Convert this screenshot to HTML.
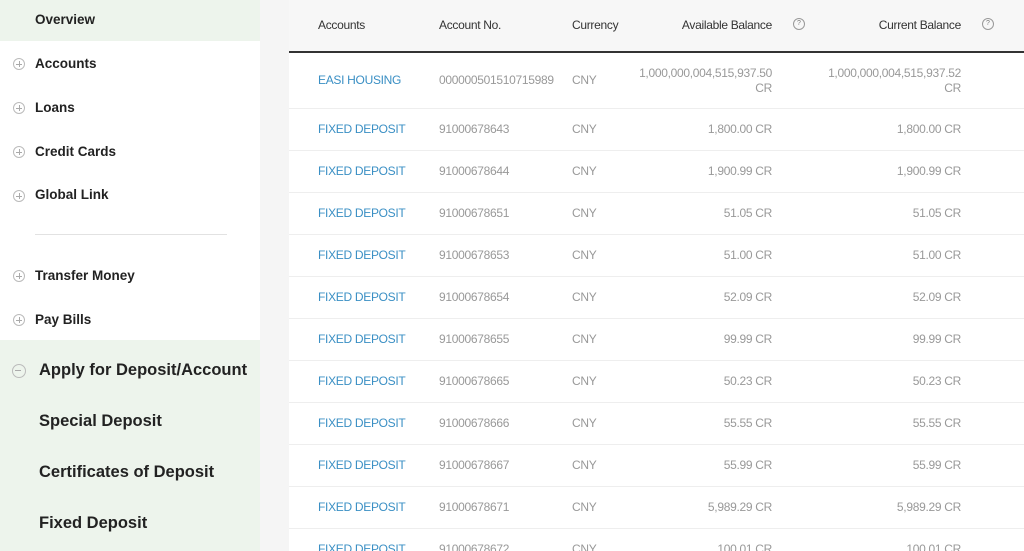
<!DOCTYPE html><html><head><style>
html,body{margin:0;width:1024px;height:551px;overflow:hidden}
body{background:#f5f5f5;font-family:"Liberation Sans",sans-serif;position:relative}
.side{position:absolute;left:0;top:0;width:260px;height:551px;background:#edf4ec}
.white{position:absolute;left:0;top:41px;width:260px;height:299px;background:#fff}
.it{position:absolute;left:35px;font-size:13.5px;font-weight:bold;color:#222}
.ic{position:absolute;left:13px;width:12px;height:12px;border:1px solid #bbb;border-radius:50%;box-sizing:border-box}
.ic:before{content:"";position:absolute;left:2px;top:5px;width:6px;height:1px;background:#aaa}
.ic.p:after{content:"";position:absolute;left:5px;top:2px;width:1px;height:6px;background:#aaa}
.big{position:absolute;left:39px;font-size:16.5px;font-weight:bold;color:#222}
.main{position:absolute;left:289px;top:0;width:735px;height:551px;background:#fff;overflow:hidden}
.hd{position:absolute;left:0;top:0;width:735px;height:51px;background:#f7f7f7;border-bottom:2px solid #333}
.h{position:absolute;top:18px;font-size:12px;color:#333;letter-spacing:-0.3px}
.q{position:absolute;top:18px;width:10px;height:10px;border:1px solid #999;border-radius:50%;font-size:7px;color:#777;text-align:center;line-height:10px}
.row{position:absolute;left:0;width:735px;border-bottom:1px solid #eee;font-size:12px;color:#999;letter-spacing:-0.3px}
.row span{position:absolute}
.a{left:29px;color:#3a8fc4}.n{left:150px}.c{left:283px}
.v1{right:252px;text-align:right}.v2{right:63px;text-align:right}
</style></head><body>
<div class="side"></div>
<div class="white"></div>
<div class="it" style="top:12px">Overview</div>
<div class="ic p" style="top:58px"></div><div class="it" style="top:56px">Accounts</div>
<div class="ic p" style="top:102px"></div><div class="it" style="top:100px">Loans</div>
<div class="ic p" style="top:146px"></div><div class="it" style="top:144px">Credit Cards</div>
<div class="ic p" style="top:190px"></div><div class="it" style="top:187px">Global Link</div>
<div style="position:absolute;left:35px;top:234px;width:192px;height:1px;background:#e2e2e2"></div>
<div class="ic p" style="top:270px"></div><div class="it" style="top:268px">Transfer Money</div>
<div class="ic p" style="top:314px"></div><div class="it" style="top:312px">Pay Bills</div>
<div class="ic" style="top:364px;left:12px;width:14px;height:14px"></div><div class="big" style="top:361px">Apply for Deposit/Account</div>
<div class="big" style="top:412px">Special Deposit</div>
<div class="big" style="top:463px">Certificates of Deposit</div>
<div class="big" style="top:514px">Fixed Deposit</div>
<div class="main">
<div class="hd">
<div class="h" style="left:29px">Accounts</div>
<div class="h" style="left:150px">Account No.</div>
<div class="h" style="left:283px">Currency</div>
<div class="h" style="right:252px">Available Balance</div>
<div class="q" style="left:504px">?</div>
<div class="h" style="right:63px">Current Balance</div>
<div class="q" style="left:693px">?</div>
</div>
<div class="row" style="top:53px;height:55px"><span class="a" style="top:20px">EASI HOUSING</span><span class="n" style="top:20px">000000501510715989</span><span class="c" style="top:20px">CNY</span><span class="v1" style="top:13px;line-height:15px">1,000,000,004,515,937.50<br>CR</span><span class="v2" style="top:13px;line-height:15px">1,000,000,004,515,937.52<br>CR</span></div>
<div class="row" style="top:109px;height:41px"><span class="a" style="top:13px">FIXED DEPOSIT</span><span class="n" style="top:13px">91000678643</span><span class="c" style="top:13px">CNY</span><span class="v1" style="top:13px">1,800.00 CR</span><span class="v2" style="top:13px">1,800.00 CR</span></div>
<div class="row" style="top:151px;height:41px"><span class="a" style="top:13px">FIXED DEPOSIT</span><span class="n" style="top:13px">91000678644</span><span class="c" style="top:13px">CNY</span><span class="v1" style="top:13px">1,900.99 CR</span><span class="v2" style="top:13px">1,900.99 CR</span></div>
<div class="row" style="top:193px;height:41px"><span class="a" style="top:13px">FIXED DEPOSIT</span><span class="n" style="top:13px">91000678651</span><span class="c" style="top:13px">CNY</span><span class="v1" style="top:13px">51.05 CR</span><span class="v2" style="top:13px">51.05 CR</span></div>
<div class="row" style="top:235px;height:41px"><span class="a" style="top:13px">FIXED DEPOSIT</span><span class="n" style="top:13px">91000678653</span><span class="c" style="top:13px">CNY</span><span class="v1" style="top:13px">51.00 CR</span><span class="v2" style="top:13px">51.00 CR</span></div>
<div class="row" style="top:277px;height:41px"><span class="a" style="top:13px">FIXED DEPOSIT</span><span class="n" style="top:13px">91000678654</span><span class="c" style="top:13px">CNY</span><span class="v1" style="top:13px">52.09 CR</span><span class="v2" style="top:13px">52.09 CR</span></div>
<div class="row" style="top:319px;height:41px"><span class="a" style="top:13px">FIXED DEPOSIT</span><span class="n" style="top:13px">91000678655</span><span class="c" style="top:13px">CNY</span><span class="v1" style="top:13px">99.99 CR</span><span class="v2" style="top:13px">99.99 CR</span></div>
<div class="row" style="top:361px;height:41px"><span class="a" style="top:13px">FIXED DEPOSIT</span><span class="n" style="top:13px">91000678665</span><span class="c" style="top:13px">CNY</span><span class="v1" style="top:13px">50.23 CR</span><span class="v2" style="top:13px">50.23 CR</span></div>
<div class="row" style="top:403px;height:41px"><span class="a" style="top:13px">FIXED DEPOSIT</span><span class="n" style="top:13px">91000678666</span><span class="c" style="top:13px">CNY</span><span class="v1" style="top:13px">55.55 CR</span><span class="v2" style="top:13px">55.55 CR</span></div>
<div class="row" style="top:445px;height:41px"><span class="a" style="top:13px">FIXED DEPOSIT</span><span class="n" style="top:13px">91000678667</span><span class="c" style="top:13px">CNY</span><span class="v1" style="top:13px">55.99 CR</span><span class="v2" style="top:13px">55.99 CR</span></div>
<div class="row" style="top:487px;height:41px"><span class="a" style="top:13px">FIXED DEPOSIT</span><span class="n" style="top:13px">91000678671</span><span class="c" style="top:13px">CNY</span><span class="v1" style="top:13px">5,989.29 CR</span><span class="v2" style="top:13px">5,989.29 CR</span></div>
<div class="row" style="top:529px;height:41px"><span class="a" style="top:13px">FIXED DEPOSIT</span><span class="n" style="top:13px">91000678672</span><span class="c" style="top:13px">CNY</span><span class="v1" style="top:13px">100.01 CR</span><span class="v2" style="top:13px">100.01 CR</span></div>
</div>
</body></html>
